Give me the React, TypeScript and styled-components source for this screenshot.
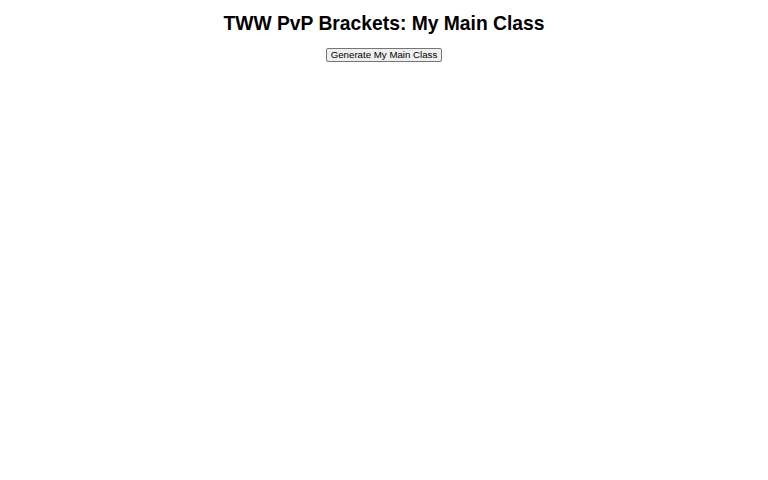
import React from "react";
import styled, { createGlobalStyle } from "styled-components";

const GlobalStyle = createGlobalStyle`
  body {
    margin: 8px;
    background: #ffffff;
    font-family: "Liberation Sans", Arial, sans-serif;
    color: #000000;
  }
`;

const Page = styled.main`
  display: flex;
  flex-direction: column;
  align-items: center;
`;

const Title = styled.h1`
  font-family: "Liberation Sans", Arial, sans-serif;
  font-size: 19.3px;
  line-height: 22px;
  font-weight: bold;
  margin: 5px 0 13px;
  text-align: center;
`;

const GenerateButton = styled.button`
  box-sizing: border-box;
  height: 14px;
  font-family: "Liberation Sans", Arial, sans-serif;
  font-size: 9.7px;
  line-height: 10px;
  padding: 0 4px;
  color: #000;
  background: #efefef;
  border: 1px solid #767676;
  border-radius: 2px;
`;

export default function App() {
  return (
    <>
      <GlobalStyle />
      <Page>
        <Title>TWW PvP Brackets: My Main Class</Title>
        <GenerateButton type="button">Generate My Main Class</GenerateButton>
      </Page>
    </>
  );
}
